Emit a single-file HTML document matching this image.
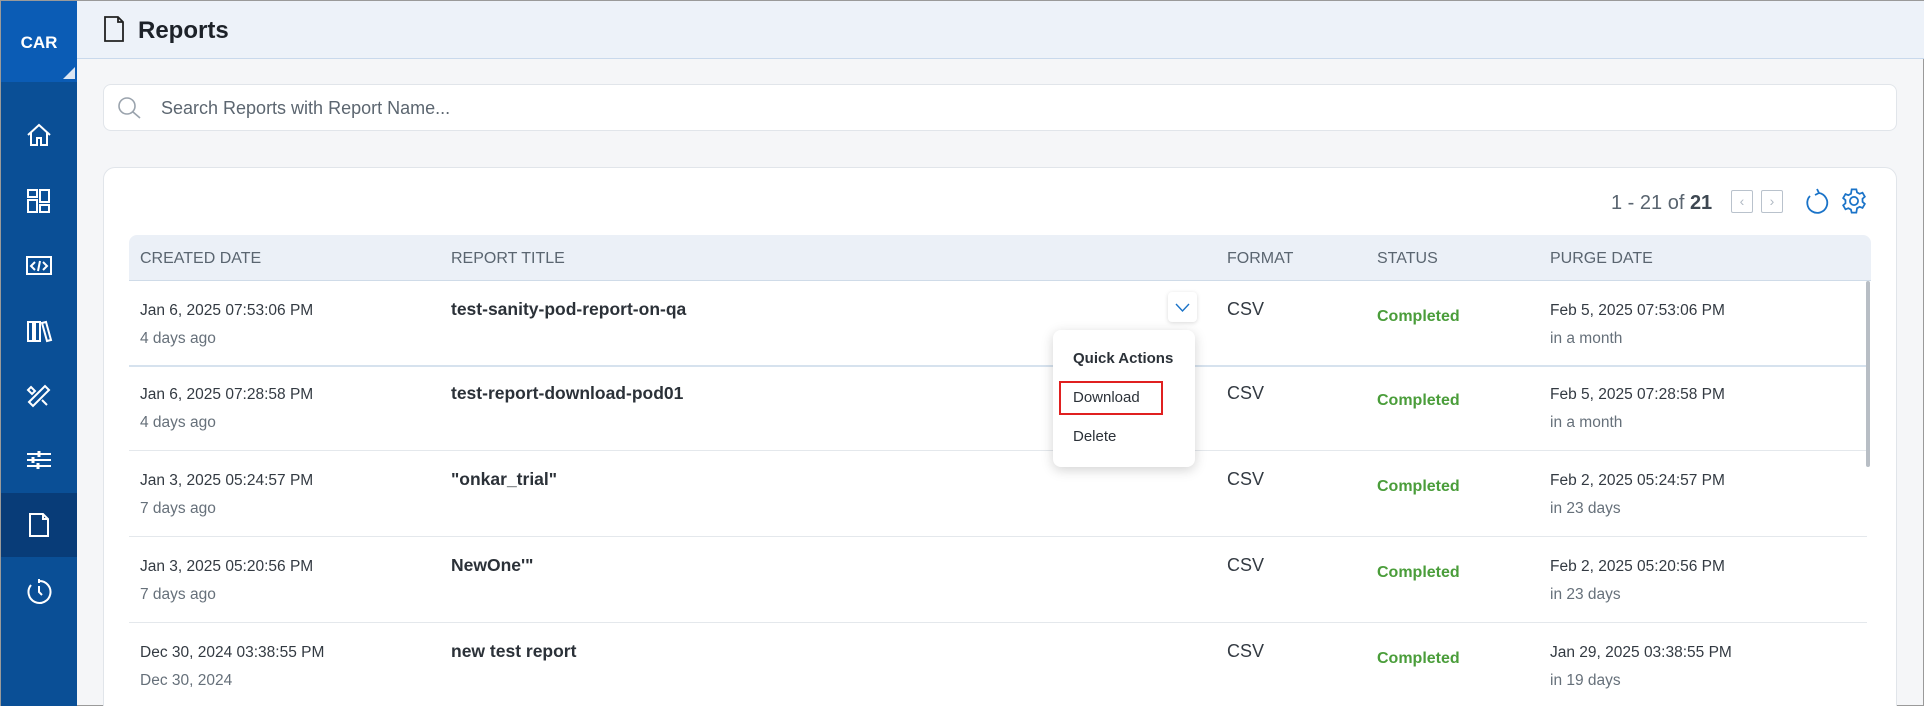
<!DOCTYPE html>
<html style="overflow:hidden;width:1924px;height:706px"><head><meta charset="utf-8"><style>
*{box-sizing:border-box;margin:0;padding:0}
html,body{overflow:hidden}
body{width:1924px;height:706px;background:#f5f6f8;font-family:"Liberation Sans",Arial,sans-serif;position:relative;border:1px solid #9a9a9a}
.abs{position:absolute}
.side{left:0;top:0;width:76px;height:706px;background:#0a4f96}
.car{left:0;top:0;width:76px;height:81px;background:#0b5cb5;color:#fff;font-weight:bold;font-size:17px;text-align:center;line-height:84px}
.car:after{content:"";position:absolute;right:2px;bottom:3px;border-left:12px solid transparent;border-bottom:12px solid #dbe6f3}
.sel{left:0;top:492px;width:76px;height:64px;background:#083c78}
.ico{position:absolute;left:24px;width:28px;height:28px}
.hdr{left:76px;top:0;width:1848px;height:58px;background:#edf2f9;border-bottom:1px solid #c9d9ec}
.title{left:137px;top:16px;font-size:24px;font-weight:bold;color:#1d2229}
.search{left:102px;top:83px;width:1794px;height:47px;background:#fff;border:1px solid #e1e5ea;border-radius:8px}
.search span{position:absolute;left:57px;top:13px;font-size:18px;color:#5c6670}
.card{left:102px;top:166px;width:1794px;height:560px;background:#fff;border:1px solid #e1e5ea;border-radius:12px}
.th{left:128px;top:234px;width:1742px;height:46px;background:#ebf0f7;border-radius:8px 8px 0 0;border-bottom:1px solid #cfdbe8}
.h{position:absolute;top:15px;font-size:16px;color:#5a6570}
.row{position:absolute;left:128px;width:1738px;height:86px;border-bottom:1px solid #e4e8ec}
.d{position:absolute;left:11px;top:21px;font-size:15.5px;color:#333a42}
.s{position:absolute;left:11px;top:49px;font-size:15.5px;color:#66707a}
.t{position:absolute;left:322px;top:18px;font-size:17.5px;font-weight:bold;color:#2b3138}
.f{position:absolute;left:1098px;top:18px;font-size:18px;color:#333a42}
.st{position:absolute;left:1248px;top:27px;font-size:16px;font-weight:bold;color:#4a9d3a}
.p{position:absolute;left:1421px;top:21px;font-size:15.5px;color:#333a42}
.ps{position:absolute;left:1421px;top:49px;font-size:15.5px;color:#66707a}
</style></head><body>
<div class="abs side"></div>
<div class="abs car">CAR</div>
<div class="abs sel"></div>
<svg class="ico" style="top:120px" viewBox="0 0 28 28" fill="none" stroke="#fff" stroke-width="2"><path d="M3 14L14 4l11 10M6 11v13h6v-7h4v7h6V11"/></svg>
<svg class="ico" style="top:186px" viewBox="0 0 28 28" fill="none" stroke="#fff" stroke-width="2"><rect x="3" y="3" width="9" height="7"/><rect x="3" y="13" width="9" height="12"/><rect x="15" y="3" width="9" height="12"/><rect x="15" y="18" width="9" height="7"/></svg>
<svg class="ico" style="top:251px" viewBox="0 0 28 28" fill="none" stroke="#fff" stroke-width="2"><rect x="2" y="5" width="24" height="17"/><path d="M10 10l-4 4 4 4M18 10l4 4-4 4M15 9l-2 10"/></svg>
<svg class="ico" style="top:316px" viewBox="0 0 28 28" fill="none" stroke="#fff" stroke-width="2"><rect x="3" y="5" width="5" height="19"/><rect x="10" y="5" width="5" height="19"/><path d="M17 6l4-1 5 18-4 1z"/></svg>
<svg class="ico" style="top:381px" viewBox="0 0 28 28" fill="none" stroke="#fff" stroke-width="2"><path d="M4 20L20 4l4 4L8 24zM6 5l4 4-3 3-4-4zM17 18l5 5"/></svg>
<svg class="ico" style="top:445px" viewBox="0 0 28 28" fill="none" stroke="#fff" stroke-width="2"><path d="M2 8h24M2 14h24M2 20h24"/><path d="M14 5v6M8 11v6M13 17v6" stroke-width="3"/></svg>
<svg class="ico" style="top:510px" viewBox="0 0 28 28" fill="none" stroke="#fff" stroke-width="2"><path d="M5 3h13l5 5v17H5zM18 3v5h5"/></svg>
<svg class="ico" style="top:576px" viewBox="0 0 28 28" fill="none" stroke="#fff" stroke-width="2"><path d="M6 8a11 11 0 1 0 8-4M14 2v4M14 9v6l3 3"/></svg>
<div class="abs hdr"></div>
<svg class="abs" style="left:102px;top:14px" width="22" height="28" viewBox="0 0 22 28" fill="none" stroke="#222" stroke-width="1.8"><path d="M2 2h13l5 5v19H2zM15 2v5h5"/></svg>
<div class="abs title">Reports</div>
<div class="abs search"><svg class="abs" style="left:13px;top:11px" width="26" height="24" viewBox="0 0 26 24" fill="none" stroke="#9aa3ad" stroke-width="1.6"><circle cx="10" cy="10" r="8"/><path d="M16 16l7 6"/></svg><span>Search Reports with Report Name...</span></div>
<div class="abs card" style="height:560px"></div>
<div class="abs" style="left:1610px;top:191px;font-size:20px;color:#5a6570">1 - 21 of <b style="color:#3e4852">21</b></div>
<div class="abs" style="left:1730px;top:189px;width:22px;height:23px;border:1px solid #b9c2cc;border-radius:2px;color:#b0b9c3;font-size:14px;text-align:center;line-height:21px">&#x2039;</div>
<div class="abs" style="left:1760px;top:189px;width:22px;height:23px;border:1px solid #b9c2cc;border-radius:2px;color:#b0b9c3;font-size:14px;text-align:center;line-height:21px">&#x203A;</div>
<svg class="abs" style="left:1801px;top:186px" width="28" height="30" viewBox="0 0 28 30" fill="none" stroke="#1a73c8" stroke-width="1.8"><path d="M17 6a10 10 0 1 1-9 3M17 6l-2-4M17 6l-4 2"/></svg>
<svg class="abs" style="left:1839px;top:186px" width="28" height="28" viewBox="0 0 24 24" fill="none" stroke="#1a73c8" stroke-width="1.5"><circle cx="12" cy="12" r="3.5"/><path d="M10 2h4l.6 2.6 2.2 1.2 2.5-.9 2 3.4-2 1.8v2.6l2 1.8-2 3.4-2.5-.9-2.2 1.2L14 22h-4l-.6-2.6-2.2-1.2-2.5.9-2-3.4 2-1.8v-2.6l-2-1.8 2-3.4 2.5.9 2.2-1.2z"/></svg>
<div class="abs th">
<div class="h" style="left:11px">CREATED DATE</div><div class="h" style="left:322px">REPORT TITLE</div><div class="h" style="left:1098px">FORMAT</div><div class="h" style="left:1248px">STATUS</div><div class="h" style="left:1421px">PURGE DATE</div>
</div>
<div class="row" style="top:280px;border-bottom:2px solid #d6e2ee"><div class="d">Jan 6, 2025 07:53:06 PM</div><div class="s">4 days ago</div><div class="t">test-sanity-pod-report-on-qa</div><div class="f">CSV</div><div class="st">Completed</div><div class="p">Feb 5, 2025 07:53:06 PM</div><div class="ps">in a month</div></div>
<div class="row" style="top:364px"><div class="d">Jan 6, 2025 07:28:58 PM</div><div class="s">4 days ago</div><div class="t">test-report-download-pod01</div><div class="f">CSV</div><div class="st">Completed</div><div class="p">Feb 5, 2025 07:28:58 PM</div><div class="ps">in a month</div></div>
<div class="row" style="top:450px"><div class="d">Jan 3, 2025 05:24:57 PM</div><div class="s">7 days ago</div><div class="t">"onkar_trial"</div><div class="f">CSV</div><div class="st">Completed</div><div class="p">Feb 2, 2025 05:24:57 PM</div><div class="ps">in 23 days</div></div>
<div class="row" style="top:536px"><div class="d">Jan 3, 2025 05:20:56 PM</div><div class="s">7 days ago</div><div class="t">NewOne'"</div><div class="f">CSV</div><div class="st">Completed</div><div class="p">Feb 2, 2025 05:20:56 PM</div><div class="ps">in 23 days</div></div>
<div class="row" style="top:622px;border:none"><div class="d">Dec 30, 2024 03:38:55 PM</div><div class="s">Dec 30, 2024</div><div class="t">new test report</div><div class="f">CSV</div><div class="st">Completed</div><div class="p">Jan 29, 2025 03:38:55 PM</div><div class="ps">in 19 days</div></div>
<div class="abs" style="left:1865px;top:280px;width:4px;height:186px;background:#b8bec5;border-radius:2px"></div>
<div class="abs" style="left:1167px;top:291px;width:29px;height:30px;background:#fff;border-radius:4px;box-shadow:0 1px 4px rgba(0,0,0,.15)"><svg width="29" height="30" viewBox="0 0 29 30" fill="none" stroke="#1a73c8" stroke-width="1.4"><path d="M8 12l6.5 7 6.5-7"/></svg></div>
<div class="abs" style="left:1052px;top:329px;width:142px;height:137px;background:#fff;border-radius:8px;box-shadow:0 3px 12px rgba(0,0,0,.18)">
<div class="abs" style="left:20px;top:20px;font-size:15px;font-weight:bold;color:#2b3138">Quick Actions</div>
<div class="abs" style="left:6px;top:51px;width:104px;height:34px;border:2px solid #e02020"></div>
<div class="abs" style="left:20px;top:59px;font-size:15px;color:#2b3138">Download</div>
<div class="abs" style="left:20px;top:98px;font-size:15px;color:#2b3138">Delete</div>
</div>
</body></html>
